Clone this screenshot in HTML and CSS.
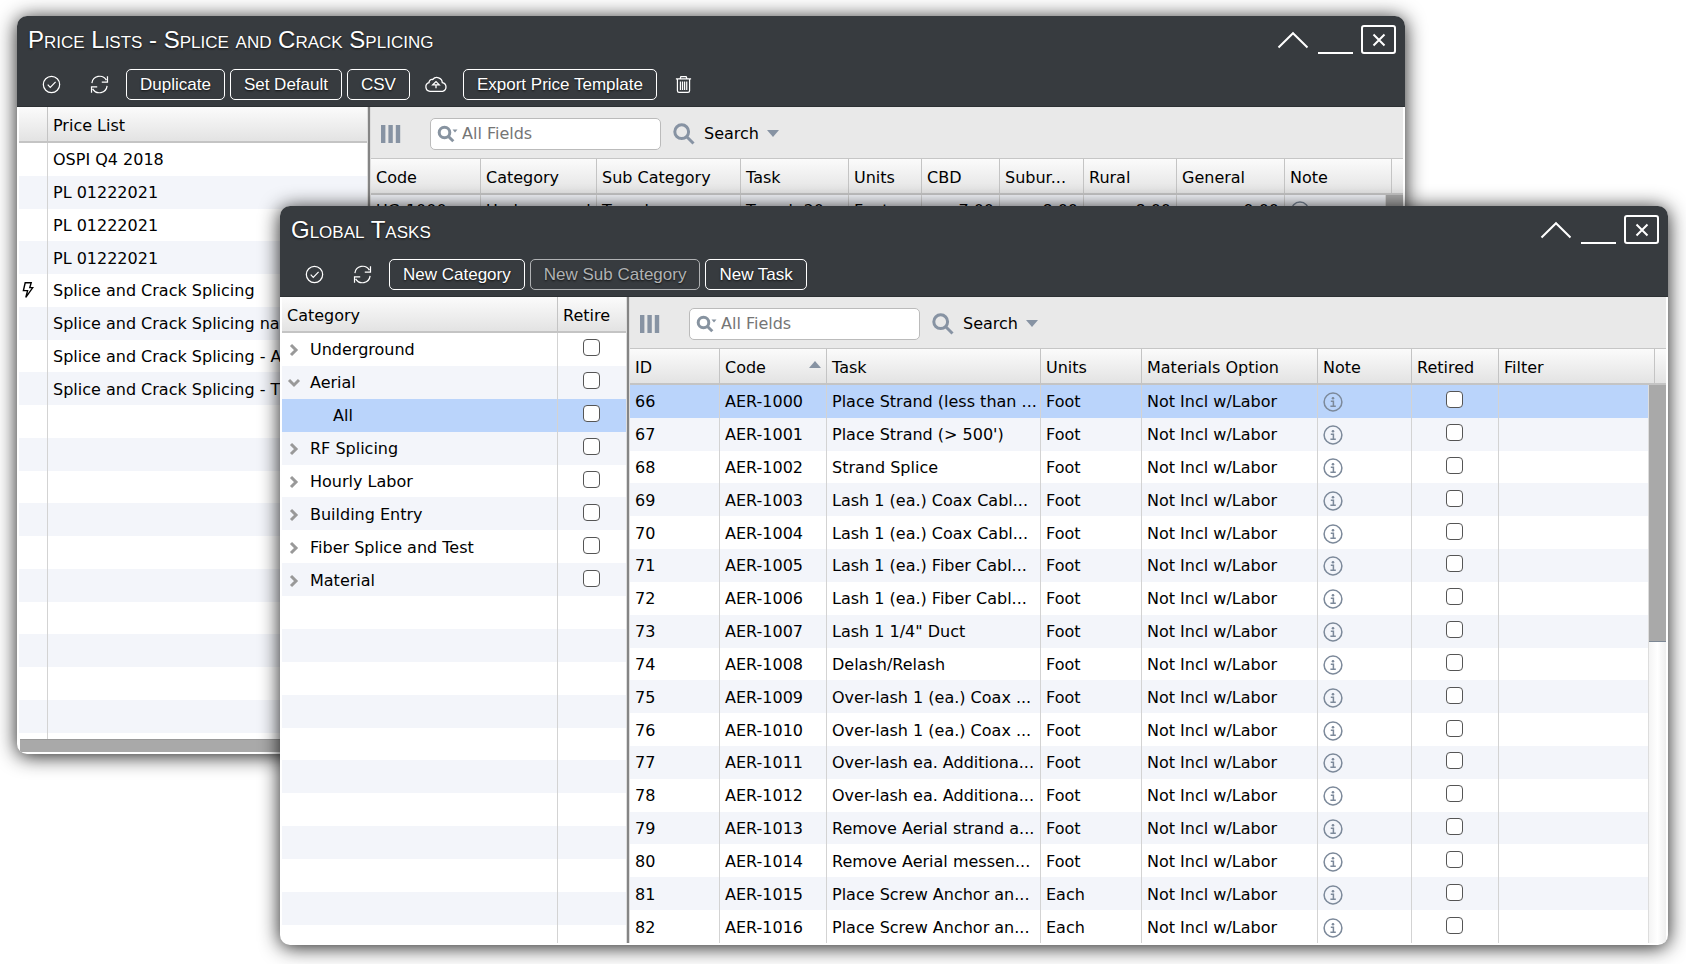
FILE: index.html
```html
<!DOCTYPE html>
<html lang="en">
<head>
    <meta charset="UTF-8">
    <meta name="viewport" content="width=device-width, initial-scale=1.0">
    <title>Global Tasks</title>
    <link rel="stylesheet" href="styles.css">
</head>
<body>
    <!-- shared icons -->
    <svg class="sprite" aria-hidden="true">
        <symbol id="i-check" viewBox="0 0 20 20"><circle cx="10" cy="10" r="8.6"/><path d="M6 10.2l2.7 2.8 5.6-5.8"/></symbol>
        <symbol id="i-refresh" viewBox="0 0 20 20"><path d="M2 8.6a8.2 8.2 0 0 1 15.2-3.2M18.4 1.4v6h-6M18 11.4a8.2 8.2 0 0 1-15.2 3.2M1.6 18.6v-6h6"/></symbol>
        <symbol id="i-cloud" viewBox="0 0 24 18"><path d="M6 16.3a4.4 4.4 0 0 1-1-8.6 3 3 0 0 1 3.7-3.2 5.4 5.4 0 0 1 9.6 3.2 4.4 4.4 0 0 1 .4 8.6zM12 13.2V9.6M8.8 9.8L12 6.6l3.2 3.2z"/></symbol>
        <symbol id="i-trash" viewBox="0 0 18 20"><path d="M1 4.2h16M5.4 4l.8-2.2h5.6l.8 2.2M2.6 4.4v12.2q0 1.8 1.8 1.8h9.2q1.8 0 1.8-1.8V4.4M5.8 6.8v9M8 6.8v9M10.2 6.8v9M12.4 6.8v9"/></symbol>
        <symbol id="i-up" viewBox="0 0 32 18"><path d="M1.5 16.5L16 2.2l14.5 14.3"/></symbol>
        <symbol id="i-close" viewBox="0 0 14 14"><path d="M1.5 1.5l11 11M12.5 1.5l-11 11"/></symbol>
        <symbol id="i-search" viewBox="0 0 22 22"><circle cx="8.7" cy="8.7" r="6.9"/><path d="M14 14l6.5 6.5"/></symbol>
        <symbol id="i-find" viewBox="0 0 22 18"><circle cx="7.5" cy="7.5" r="5.3"/><path d="M11.5 11.5l4.8 4.8"/><path class="solid" d="M15.5 4.5h5l-2.5 3z"/></symbol>
        <symbol id="i-columns" viewBox="0 0 20 18"><path class="solid" d="M0 0h4.4v18H0zM7.4 0h4.4v18H7.4zM14.8 0h4.4v18h-4.4z"/></symbol>
        <symbol id="i-info" viewBox="0 0 20 20"><circle cx="10" cy="10" r="8.9"/><circle class="solid" cx="10" cy="6.2" r="1.3"/><path d="M7.8 9.2h2.6v4.8M7.4 14.2h5.4"/></symbol>
        <symbol id="i-bolt" viewBox="0 0 12 18"><path d="M3.2 1.8h6L7.8 6.6h3L3.8 16.4l1.8-6.8H1.4z"/></symbol>
        <symbol id="i-chevron" viewBox="0 0 14 14"><path d="M4 2l5 5-5 5"/></symbol>
    </svg>

    <main class="desktop">
        <section class="window window-prices">
            <header class="titlebar">
                <h2>Price Lists - Splice and Crack Splicing</h2>
                <div class="window-controls">
                    <button class="ctl" aria-label="Maximize"><svg class="up"><use href="#i-up"/></svg></button>
                    <button class="ctl ctl-min" aria-label="Minimize"></button>
                    <button class="ctl ctl-close" aria-label="Close"><svg><use href="#i-close"/></svg></button>
                </div>
            </header>
            <div class="toolbar">
                <button class="icon-btn" aria-label="Apply"><svg><use href="#i-check"/></svg></button>
                <button class="icon-btn" aria-label="Refresh"><svg><use href="#i-refresh"/></svg></button>
                <button class="btn">Duplicate</button>
                <button class="btn">Set Default</button>
                <button class="btn">CSV</button>
                <button class="icon-btn" aria-label="Upload"><svg class="cloud"><use href="#i-cloud"/></svg></button>
                <button class="btn">Export Price Template</button>
                <button class="icon-btn" aria-label="Delete"><svg><use href="#i-trash"/></svg></button>
            </div>
            <div class="panes">
                <div class="side side-prices">
                    <table class="grid">
                        <colgroup><col class="c-flag"><col></colgroup>
                        <thead><tr><th></th><th>Price List</th></tr></thead>
                        <tbody id="priceLists"></tbody>
                    </table>
                    <div class="hscroll"></div>
                </div>
                <div class="splitter"></div>
                <div class="content">
                    <div class="searchbar">
                        <button class="plain" aria-label="Columns"><svg class="columns"><use href="#i-columns"/></svg></button>
                        <label class="search-box">
                            <svg><use href="#i-find"/></svg>
                            <input type="text" placeholder="All Fields" aria-label="Search price list">
                        </label>
                        <button class="plain search-btn"><svg class="glass"><use href="#i-search"/></svg>Search<span class="caret"></span></button>
                    </div>
                    <div class="grid-wrap">
                        <table class="grid grid-prices">
                            <colgroup>
                                <col class="w110"><col class="w116"><col class="w144"><col class="w108"><col class="w73"><col class="w78"><col class="w84"><col class="w93"><col class="w108"><col><col class="c-end">
                            </colgroup>
                            <thead>
                                <tr><th>Code</th><th>Category</th><th>Sub Category</th><th>Task</th><th>Units</th><th>CBD</th><th>Subur...</th><th>Rural</th><th>General</th><th>Note</th><th></th></tr>
                            </thead>
                            <tbody id="prices"></tbody>
                        </table>
                        <div class="vscroll"><div class="thumb"></div></div>
                    </div>
                </div>
            </div>
        </section>

        <section class="window window-tasks">
            <header class="titlebar">
                <h2>Global Tasks</h2>
                <div class="window-controls">
                    <button class="ctl" aria-label="Maximize"><svg class="up"><use href="#i-up"/></svg></button>
                    <button class="ctl ctl-min" aria-label="Minimize"></button>
                    <button class="ctl ctl-close" aria-label="Close"><svg><use href="#i-close"/></svg></button>
                </div>
            </header>
            <div class="toolbar">
                <button class="icon-btn" aria-label="Apply"><svg><use href="#i-check"/></svg></button>
                <button class="icon-btn" aria-label="Refresh"><svg><use href="#i-refresh"/></svg></button>
                <button class="btn">New Category</button>
                <button class="btn" disabled>New Sub Category</button>
                <button class="btn">New Task</button>
            </div>
            <div class="panes">
                <div class="side side-tasks">
                    <table class="grid">
                        <colgroup><col><col class="c-retire"></colgroup>
                        <thead><tr><th>Category</th><th>Retire</th></tr></thead>
                        <tbody id="categories"></tbody>
                    </table>
                </div>
                <div class="splitter"></div>
                <div class="content">
                    <div class="searchbar">
                        <button class="plain" aria-label="Columns"><svg class="columns"><use href="#i-columns"/></svg></button>
                        <label class="search-box">
                            <svg><use href="#i-find"/></svg>
                            <input type="text" placeholder="All Fields" aria-label="Search tasks">
                        </label>
                        <button class="plain search-btn"><svg class="glass"><use href="#i-search"/></svg>Search<span class="caret"></span></button>
                    </div>
                    <div class="grid-wrap">
                        <table class="grid">
                            <colgroup>
                                <col class="w90"><col class="w107"><col class="w214"><col class="w101"><col class="w176"><col class="w94"><col class="w87"><col><col class="c-end">
                            </colgroup>
                            <thead>
                                <tr><th>ID</th><th class="sorted">Code</th><th>Task</th><th>Units</th><th>Materials Option</th><th>Note</th><th>Retired</th><th>Filter</th><th></th></tr>
                            </thead>
                            <tbody id="tasks"></tbody>
                        </table>
                        <div class="vscroll"><div class="thumb"></div></div>
                    </div>
                </div>
            </div>
        </section>
    </main>

    <script src="script.js"></script>
</body>
</html>
```

FILE: styles.css
```css
* {
    box-sizing: border-box;
}

body {
    margin: 0;
    background: #fff;
    color: #000;
    font-family: Verdana, "DejaVu Sans", sans-serif;
    font-size: 16px;
}

button {
    margin: 0;
    padding: 0;
    border: 0;
    background: none;
    color: inherit;
    font: inherit;
    cursor: pointer;
}

svg {
    display: block;
    fill: none;
    stroke: currentColor;
}

.solid {
    fill: currentColor;
    stroke: none;
}

.sprite {
    position: absolute;
    width: 0;
    height: 0;
}

.desktop {
    position: relative;
    height: 100vh;
    min-height: 600px;
    overflow: hidden;
}

/* windows */
.window {
    position: absolute;
    display: flex;
    flex-direction: column;
    border-radius: 10px;
    overflow: hidden;
    background: #fff;
    box-shadow: 0 2px 20px rgba(0, 0, 0, 0.9);
}

.window-prices {
    top: 16px;
    right: 281px;
    bottom: 210px;
    left: 17px;
}

.window-tasks {
    top: 206px;
    right: 18px;
    bottom: 19px;
    left: 280px;
}

.titlebar {
    display: flex;
    justify-content: space-between;
    height: 50px;
    padding: 9px 9px 0 11px;
    background: #373b3f;
    color: #fff;
}

.titlebar h2 {
    margin: 0;
    font-family: Helvetica, "Liberation Sans", sans-serif;
    font-size: 24px;
    font-weight: normal;
    font-variant: small-caps;
    line-height: 30px;
    text-shadow: 0 1px 2px #111;
}

.window-controls {
    display: flex;
    gap: 8px;
    height: 29px;
}

.ctl {
    display: flex;
    align-items: center;
    justify-content: center;
    width: 35px;
}

.ctl .up {
    width: 32px;
    height: 18px;
    stroke-width: 2;
}

.ctl-min {
    border-bottom: 2px solid #fff;
}

.ctl-close {
    border: 2px solid #fff;
    border-radius: 3px;
}

.ctl-close svg {
    width: 14px;
    height: 14px;
    stroke-width: 2;
}

.toolbar {
    display: flex;
    align-items: center;
    gap: 5px;
    height: 41px;
    padding: 0 13px 4px;
    background: #373b3f;
    border-bottom: 1px solid #2c3033;
    color: #fff;
    font-family: Helvetica, "Liberation Sans", sans-serif;
    font-size: 17px;
}

.btn {
    height: 31px;
    padding: 1px 13px 0;
    border: 1px solid #fff;
    border-radius: 5px;
    text-shadow: 0 1px 2px #111;
    white-space: nowrap;
}

.btn:disabled {
    border-color: #b0b2b4;
    color: #b0b2b4;
}

.icon-btn {
    display: flex;
    align-items: center;
    justify-content: center;
    width: 43px;
    height: 31px;
}

.icon-btn svg {
    width: 19px;
    height: 19px;
    stroke-width: 1.3;
}

.icon-btn .cloud {
    width: 24px;
    height: 18px;
}

/* panes */
.panes {
    display: flex;
    flex: 1;
    min-height: 0;
    padding: 0 2px 2px;
}

.side {
    display: flex;
    flex-direction: column;
    flex: none;
    min-height: 0;
}

.side-prices {
    width: 348px;
}

.side-tasks {
    width: 344px;
}

.side .grid {
    flex: 1;
}

.splitter {
    flex: none;
    width: 4px;
    border-right: 1px solid #ddd;
    border-left: 1px solid #ddd;
    background: #858585;
}

.content {
    display: flex;
    flex-direction: column;
    flex: 1;
    min-width: 0;
}

.searchbar {
    display: flex;
    align-items: center;
    height: 52px;
    padding: 2px 0 0 10px;
    background: #e9e9e9;
    border-bottom: 1px solid #c6c6c6;
}

.plain {
    display: flex;
    align-items: center;
}

.columns {
    width: 20px;
    height: 18px;
    color: #8793a3;
}

.search-box {
    display: flex;
    align-items: center;
    gap: 3px;
    width: 231px;
    height: 32px;
    margin: 0 12px 0 29px;
    padding: 0 6px;
    border: 1px solid #bbb;
    border-radius: 5px;
    background: #fff;
}

.search-box svg {
    flex: none;
    width: 22px;
    height: 18px;
    color: #8793a0;
    stroke-width: 3;
}

.search-box input {
    width: 100%;
    min-width: 0;
    padding: 0;
    border: 0;
    outline: 0;
    background: none;
    font: inherit;
}

.search-box input::placeholder {
    color: #757575;
}

.glass {
    width: 22px;
    height: 22px;
    margin-right: 9px;
    color: #8793a3;
    stroke-width: 3;
}

.caret {
    margin-left: 8px;
    border: 6px solid transparent;
    border-top: 7px solid #8793a3;
    border-bottom: 0;
}

/* grids */
.grid {
    width: 100%;
    height: 100%;
    border-collapse: separate;
    border-spacing: 0;
    table-layout: fixed;
}

.grid th,
.grid td {
    padding: 2px 0 0 5px;
    border-right: 1px solid #d3d3d3;
    overflow: hidden;
    font-weight: normal;
    text-align: left;
    text-overflow: ellipsis;
    white-space: nowrap;
}

.grid th {
    position: relative;
    height: 36px;
    background: linear-gradient(#fbfbfb, #e3e3e3);
    border-right-color: #c4c4c4;
    border-bottom: 2px solid #c4c4c4;
}

.grid th:last-child,
.grid td:last-child {
    border-right: 0;
}

.grid td {
    line-height: 20px;
}

.grid .num {
    padding-right: 5px;
    text-align: right;
}

.striped-even tr:nth-child(even),
.striped-odd tr:nth-child(odd) {
    background: #f3f5fa;
}

.grid tbody tr.selected {
    background: #bad4fb;
}

/* short row that closes a side list */
.grid .rest td {
    height: 18px;
    padding: 0;
}

.side-prices .rest td {
    height: 6px;
}

.sorted::after {
    content: "";
    position: absolute;
    top: 12px;
    right: 5px;
    border: 6px solid transparent;
    border-top: 0;
    border-bottom: 7px solid #8793a3;
}

.grid-wrap {
    position: relative;
    flex: 1;
    min-height: 0;
    overflow: hidden;
}

.grid-prices {
    height: auto;
}

.grid-prices td {
    height: 32px;
    padding-top: 0;
}

.vscroll {
    position: absolute;
    top: 36px;
    right: 0;
    bottom: 0;
    width: 18px;
    border-left: 1px solid #ddd;
    background: linear-gradient(to right, #f4f4f4, #fff 50%, #efefef);
}

.thumb {
    height: 46%;
    background: #a9a9a9;
    border-bottom: 1px solid #7c8794;
}

.hscroll {
    flex: none;
    height: 13px;
    margin-left: 1px;
    background: #a9a9a9;
    border-top: 1px solid #999;
}

.flag {
    width: 12px;
    height: 18px;
    stroke-width: 1.4;
}

.grid .flag-cell {
    padding: 0 0 0 3px;
}

.info {
    width: 20px;
    height: 20px;
    color: #7c899a;
    stroke-width: 1.5;
}

.node {
    display: flex;
    align-items: center;
    gap: 9px;
}

.node svg {
    width: 14px;
    height: 14px;
    color: #999;
    stroke-width: 3;
}

.node .open {
    transform: rotate(90deg);
}

.leaf {
    padding-left: 46px;
}

input[type="checkbox"] {
    display: block;
    appearance: none;
    width: 17px;
    height: 17px;
    margin: 0 auto;
    border: 1px solid #555;
    border-radius: 4px;
    background: #fff;
}

input[type="checkbox"]:checked {
    background: #7c899a;
}

.grid .check {
    padding: 0 2px 3px 0;
}

/* column widths */
.c-flag { width: 29px; }
.c-retire { width: 68px; }
.c-end { width: 11px; }
.w73 { width: 73px; }
.w78 { width: 78px; }
.w84 { width: 84px; }
.w87 { width: 87px; }
.w90 { width: 90px; }
.w93 { width: 93px; }
.w94 { width: 94px; }
.w101 { width: 101px; }
.w107 { width: 107px; }
.w108 { width: 108px; }
.w110 { width: 110px; }
.w116 { width: 116px; }
.w144 { width: 144px; }
.w176 { width: 176px; }
.w214 { width: 214px; }
```

FILE: script.js
```js
const priceLists = [
    'OSPI Q4 2018',
    'PL 01222021',
    'PL 01222021',
    'PL 01222021',
    'Splice and Crack Splicing',
    'Splice and Crack Splicing name',
    'Splice and Crack Splicing - A',
    'Splice and Crack Splicing - T'
];
const defaultList = 4;

const prices = [
    ['UG-1000', 'Underground', 'Trench', 'Trench 20...', 'Foot', '7.00', '8.00', '8.00', '9.00']
];

const categories = [
    { name: 'Underground' },
    { name: 'Aerial', open: true },
    { name: 'All', leaf: true },
    { name: 'RF Splicing' },
    { name: 'Hourly Labor' },
    { name: 'Building Entry' },
    { name: 'Fiber Splice and Test' },
    { name: 'Material' }
];

const tasks = [
    ['Place Strand (less than ...', 'Foot'],
    ["Place Strand (> 500')", 'Foot'],
    ['Strand Splice', 'Foot'],
    ['Lash 1 (ea.) Coax Cabl...', 'Foot'],
    ['Lash 1 (ea.) Coax Cabl...', 'Foot'],
    ['Lash 1 (ea.) Fiber Cabl...', 'Foot'],
    ['Lash 1 (ea.) Fiber Cabl...', 'Foot'],
    ['Lash 1 1/4" Duct', 'Foot'],
    ['Delash/Relash', 'Foot'],
    ['Over-lash 1 (ea.) Coax ...', 'Foot'],
    ['Over-lash 1 (ea.) Coax ...', 'Foot'],
    ['Over-lash ea. Additiona...', 'Foot'],
    ['Over-lash ea. Additiona...', 'Foot'],
    ['Remove Aerial strand a...', 'Foot'],
    ['Remove Aerial messen...', 'Foot'],
    ['Place Screw Anchor an...', 'Each'],
    ['Place Screw Anchor an...', 'Each']
];

// side lists are padded with empty rows so the stripes reach the bottom
const SIDE_ROWS = 18;

function icon(name, cls) {
    return `<svg class="${cls}"><use href="#i-${name}"/></svg>`;
}

function fill(id, stripes, rows) {
    const body = document.getElementById(id);
    body.className = stripes;
    body.innerHTML = rows.join('');
}

function pad(rows) {
    while (rows.length < SIDE_ROWS) {
        rows.push('<tr><td>&nbsp;</td><td>&nbsp;</td></tr>');
    }
    rows.push('<tr class="rest"><td></td><td></td></tr>');
    return rows;
}

fill('priceLists', 'striped-even', pad(priceLists.map((name, i) =>
    `<tr><td class="flag-cell">${i === defaultList ? icon('bolt', 'flag') : ''}</td><td>${name}</td></tr>`
)));

fill('prices', 'striped-odd', prices.map(row =>
    '<tr>' + row.map((v, i) => `<td${i > 4 ? ' class="num"' : ''}>${v}</td>`).join('') +
    `<td>${icon('info', 'info')}</td><td></td></tr>`
));

fill('categories', 'striped-even', pad(categories.map(c => {
    const label = c.leaf
        ? `<div class="leaf">${c.name}</div>`
        : `<div class="node">${icon('chevron', c.open ? 'open' : '')}${c.name}</div>`;
    return `<tr class="${c.leaf ? 'selected' : ''}"><td>${label}</td>` +
        `<td class="check"><input type="checkbox" aria-label="Retire ${c.name}"></td></tr>`;
})));

fill('tasks', 'striped-even', tasks.map(([task, unit], i) =>
    `<tr class="${i === 0 ? 'selected' : ''}"><td>${66 + i}</td><td>AER-${1000 + i}</td><td>${task}</td>` +
    `<td>${unit}</td><td>Not Incl w/Labor</td><td>${icon('info', 'info')}</td>` +
    `<td class="check"><input type="checkbox" aria-label="Retired ${66 + i}"></td><td></td><td></td></tr>`
));
```
